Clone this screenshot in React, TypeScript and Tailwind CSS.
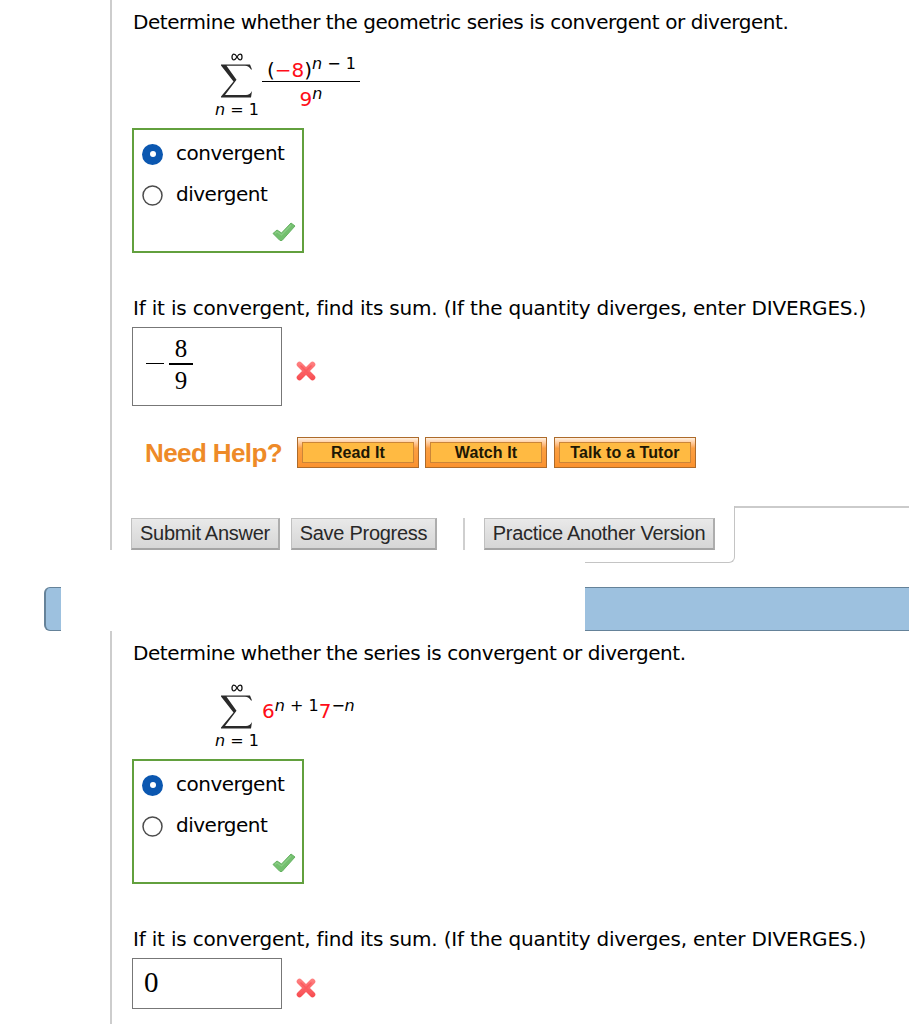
import type { ReactNode } from "react";

const VERDANA = "font-['DejaVu_Sans',sans-serif]";

function Sup({ children, className = "" }: { children: ReactNode; className?: string }) {
  return <span className={`whitespace-pre text-[16px] text-black ${className}`}>{children}</span>;
}

function Sigma() {
  return (
    <div className="flex w-[44px] shrink-0 flex-col items-center">
      <svg width="12" height="8" viewBox="0 0 12 8" className="mt-[5px] mb-[3px] block">
        <path d="M6 4C4.8 2 4 1.2 2.9 1.2S1 2.4 1 4 1.8 6.8 2.9 6.8 4.8 6 6 4 8 1.2 9.1 1.2 11 2.4 11 4 10.2 6.8 9.1 6.8 7.2 6 6 4Z" fill="none" stroke="#111" strokeWidth="1.3" />
      </svg>
      <svg width="32" height="34" viewBox="0 0 32 34" className="block">
        <path d="M0 .5H29L31 5.5H30Q28 2 24 1.8H5.5L15.5 15.8 4 31H25Q29 31 31 27L30 33.5H0V32.5L12.5 17.5 0 1.5Z" fill="#2a2a2a" />
      </svg>
      <div className="mt-[3px] h-[18px] text-[16px] leading-[18px] whitespace-pre">
        <i>n</i> = 1
      </div>
    </div>
  );
}

function Check() {
  return (
    <svg width="24" height="20" viewBox="0 0 24 20" className="block">
      <path d="M1 11.5 5 8 9.5 11 19 1 23 4 10 18.5H8Z" fill="#74c06f" stroke="#66b162" strokeWidth="1" strokeLinejoin="round" />
      <path d="M3 11.5 5 9.7 9.5 13 19 3" fill="none" stroke="#8bcd86" strokeWidth="1.2" />
    </svg>
  );
}

function Cross() {
  return (
    <svg width="20" height="20" viewBox="0 0 20 20" className="block">
      <defs>
        <linearGradient id="crossFill" x1="0" y1="0" x2="0" y2="20" gradientUnits="userSpaceOnUse">
          <stop stopColor="#ff8585" />
          <stop offset="1" stopColor="#f7484d" />
        </linearGradient>
      </defs>
      <path d="M3.5 3.5 16.5 16.5M16.5 3.5 3.5 16.5" stroke="url(#crossFill)" strokeWidth="5.6" strokeLinecap="round" />
      <path d="M5 5 15 15M15 5 5 15" stroke="#fb5a5f" strokeWidth="1.6" strokeLinecap="round" />
    </svg>
  );
}

function Choices() {
  return (
    <div className="flex h-[125px] w-[172px] flex-col border-2 border-[#62a03e] pl-[8px] text-[20px] tracking-[-0.5px]">
      <div className="flex h-[48px] items-center gap-[13px]">
        <span className="flex size-[21px] items-center justify-center rounded-full bg-[#0b57b0]">
          <span className="size-[6px] rounded-full bg-white" />
        </span>
        <span className="-mt-[2px]">convergent</span>
      </div>
      <div className="flex h-[35px] items-center gap-[13px]">
        <svg width="21" height="21" viewBox="0 0 21 21" className="block">
          <circle cx="10.5" cy="10.5" r="9.5" fill="#fff" stroke="#4c4c4c" strokeWidth="1.5" />
        </svg>
        <span className="-mt-[3px]">divergent</span>
      </div>
      <div className="mt-[9px] flex justify-end pr-[6px]">
        <Check />
      </div>
    </div>
  );
}

function HelpButton({ children, className }: { children: ReactNode; className: string }) {
  return (
    <button className={`h-[31px] border border-[#ad6b2b] bg-linear-to-b from-[#fff0e0] via-[#fba043] via-35% to-[#fb922e] p-[4px] ${className}`}>
      <span className="flex h-full items-center justify-center border-[1.5px] border-[#cb8538] bg-[#ffba42] pt-px text-[16px] leading-none font-bold tracking-[0.1px] text-[#201704]">
        {children}
      </span>
    </button>
  );
}

function GreyButton({ children, className }: { children: ReactNode; className: string }) {
  return (
    <button className={`h-[32px] shrink-0 border border-r-2 border-b-2 border-t-[#c0c0c0] border-r-[#adadad] border-b-[#a4a4a4] border-l-[#c0c0c0] bg-linear-to-b from-[#e9e9e9] to-[#d6d6d6] pb-px text-[20px] leading-[27px] tracking-[-0.27px] whitespace-nowrap text-[#282828] ${className}`}>
      {children}
    </button>
  );
}

function SumPrompt() {
  return (
    <p className="mt-[33px] h-[41px] pl-px text-[20px] leading-[44px] tracking-[-0.19px] whitespace-nowrap">
      If it is convergent, find its sum. (If the quantity diverges, enter DIVERGES.)
    </p>
  );
}

export default function App() {
  return (
    <div className={`h-[1024px] w-[909px] overflow-hidden bg-white text-black ${VERDANA}`}>
      <section className="ml-[110px] h-[506px] border-l-2 border-[#cdcdcd] pl-[20px]">
        <h1 className="h-[44px] pl-px text-[20px] leading-[45px] tracking-[-0.445px] whitespace-nowrap">
          Determine whether the geometric series is convergent or divergent.
        </h1>
        <div className="flex h-[84px] pt-[4px] pl-[83px]">
          <Sigma />
          <div className="ml-[3px] flex w-[98px] flex-col items-center">
            <div className="flex h-[34px] w-full items-start justify-center border-b-[1.5px] border-black pl-px text-[20px] leading-[44px] whitespace-nowrap">
              <span>(<span className="text-[#ff0d18]">−8</span>)</span>
              <Sup className="leading-[32px]"><i>n</i> − 1</Sup>
            </div>
            <div className="flex h-[34px] text-[20px] leading-[34px] text-[#ff0d18]">
              9<Sup className="leading-[23px]"><i>n</i></Sup>
            </div>
          </div>
        </div>
        <Choices />
        <SumPrompt />
        <div className="flex h-[79px] items-center gap-[14px]">
          <div className="flex h-full w-[150px] border-[1.5px] border-[#777] pt-[7px] pl-[13px] font-['Liberation_Serif',serif] text-[25px]">
            <span className="mt-[28px] h-px w-[18px] bg-black" />
            <div className="ml-[5px] flex w-[24px] flex-col items-center">
              <span className="h-[28px] leading-[28px]">8</span>
              <span className="h-[2px] w-full bg-black" />
              <span className="h-[30px] leading-[32px]">9</span>
            </div>
          </div>
          <div className="pt-[8px]"><Cross /></div>
        </div>
        <div className="mt-[31px] flex h-[31px] items-center pl-[12px] font-['Liberation_Sans',sans-serif]">
          <span className="w-[153px] pl-px text-[26px] leading-[30px] font-bold tracking-[-0.6px] whitespace-nowrap text-[#ee8a28]">Need Help?</span>
          <HelpButton className="w-[122px]">Read It</HelpButton>
          <HelpButton className="ml-[6px] w-[122px]">Watch It</HelpButton>
          <HelpButton className="ml-[7px] w-[142px]">Talk to a Tutor</HelpButton>
        </div>
      </section>

      <div className="flex h-[57px]">
        <div className="w-[585px] shrink-0 pl-[110px] font-['Liberation_Sans',sans-serif]">
          <div className="flex h-[44px] border-l-2 border-[#cdcdcd] pt-[12px] pl-[19px]">
            <GreyButton className="w-[149px]">Submit Answer</GreyButton>
            <GreyButton className="ml-[11px] w-[146px]">Save Progress</GreyButton>
            <span className="ml-[26px] h-[32px] w-[2px] shrink-0 bg-[#cfcfcf]" />
            <GreyButton className="ml-[19px] w-[231px]">Practice Another Version</GreyButton>
          </div>
        </div>
        <div className="w-[150px] shrink-0 rounded-br-[6px] border-r-[1.5px] border-b-[1.5px] border-[#c4c4c4]" />
        <div className="h-[2px] grow bg-[#cbcbcb]" />
      </div>

      <div className="mt-[24px] flex h-[44px] justify-between pl-[44px]">
        <div className="w-[17px] rounded-l-[6px] border-y-[1.5px] border-l-2 border-[#658299] bg-[#9dc1df]" />
        <div className="w-[324px] border-y-[1.5px] border-[#658299] bg-[#9dc1df]" />
      </div>

      <section className="ml-[110px] h-[393px] border-l-2 border-[#cdcdcd] pl-[20px]">
        <h2 className="h-[44px] pl-px text-[20px] leading-[45px] tracking-[-0.43px] whitespace-nowrap">
          Determine whether the series is convergent or divergent.
        </h2>
        <div className="flex h-[84px] pt-[4px] pl-[83px]">
          <Sigma />
          <div className="ml-[3px] flex text-[20px] leading-[64px] whitespace-nowrap text-[#ff0d18]">
            6<Sup className="leading-[54px]"><i>n</i> + 1</Sup>7<Sup className="tracking-[-0.4px] leading-[54px]">−<i>n</i></Sup>
          </div>
        </div>
        <Choices />
        <SumPrompt />
        <div className="flex h-[51px] items-center gap-[14px]">
          <div className="h-full w-[150px] border-[1.5px] border-[#777] pl-[11px] font-['Liberation_Serif',serif] text-[29px] leading-[47px]">0</div>
          <div className="pt-[8px]"><Cross /></div>
        </div>
      </section>
    </div>
  );
}
